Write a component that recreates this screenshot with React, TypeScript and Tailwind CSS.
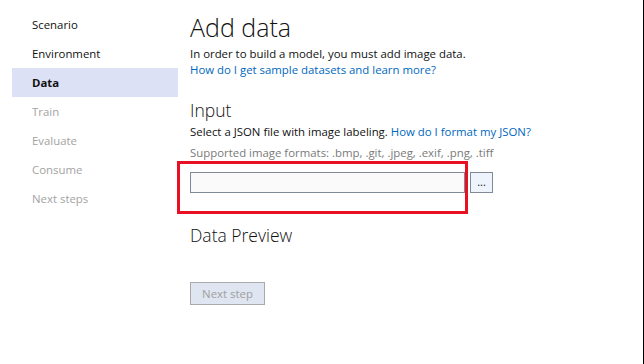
import React from 'react';

const NAV = [
  { label: 'Scenario', state: 'done' },
  { label: 'Environment', state: 'done' },
  { label: 'Data', state: 'active' },
  { label: 'Train', state: 'off' },
  { label: 'Evaluate', state: 'off' },
  { label: 'Consume', state: 'off' },
  { label: 'Next steps', state: 'off' },
];

export default function App() {
  return (
    <div
      className="flex w-[644px] h-[364px] bg-white border-r border-black overflow-hidden"
      style={{ fontFamily: '"Open Sans", "Noto Sans", sans-serif' }}
    >
      {/* Steps */}
      <div className="w-[178px] pt-[10px] pl-[12px] shrink-0">
        {NAV.map((item) => (
          <div
            key={item.label}
            className={
              'h-[29px] flex items-center pl-[20px] text-[11.4px] ' +
              (item.state === 'active'
                ? 'bg-[#dce1f6] font-bold text-[#111]'
                : item.state === 'done'
                ? 'text-[#111]'
                : 'text-[#a3a3a3]')
            }
          >
            {item.label}
          </div>
        ))}
      </div>

      {/* Content */}
      <div className="pl-[12px] pt-[11px] text-[11.4px] text-[#111]">
        <h1 className="text-[25px] font-light leading-[32px]">Add data</h1>
        <p className="leading-[16px] mt-[3px]">In order to build a model, you must add image data.</p>
        <a className="block leading-[16px] text-[#0067c0]">How do I get sample datasets and learn more?</a>

        <h2 className="text-[17.5px] font-light leading-[24px] mt-[20px]">Input</h2>
        <p className="leading-[16px] mt-[2px]">
          Select a JSON file with image labeling.{' '}
          <a className="text-[#0067c0]">How do I format my JSON?</a>
        </p>
        <p className="leading-[16px] mt-[5px] text-[#7a7a7a]">
          Supported image formats: .bmp, .git, .jpeg, .exif, .png, .tiff
        </p>

        <div className="relative mt-[11px] flex gap-[5px] h-[21px]">
          <div className="w-[275px] h-[21px] border border-[#7f8a99] bg-[#fafafa]" />
          <button className="w-[23px] h-[21px] border border-[#7f8a99] bg-[#eef3fc] text-[11px] leading-[14px] flex items-end justify-center pb-[3px]">
            ...
          </button>
          {/* highlight box */}
          <div className="absolute left-[-13px] top-[-11px] w-[291px] h-[53px] border-[3px] border-[#e81123]" />
        </div>

        <h2 className="text-[17.5px] font-light leading-[24px] mt-[30px]">Data Preview</h2>

        <button className="mt-[35px] w-[75px] h-[23px] border border-[#a9a9a9] bg-[#dfe5f1] text-[#a0a0a0] text-[11.4px] flex items-center justify-center">
          Next step
        </button>
      </div>
    </div>
  );
}
